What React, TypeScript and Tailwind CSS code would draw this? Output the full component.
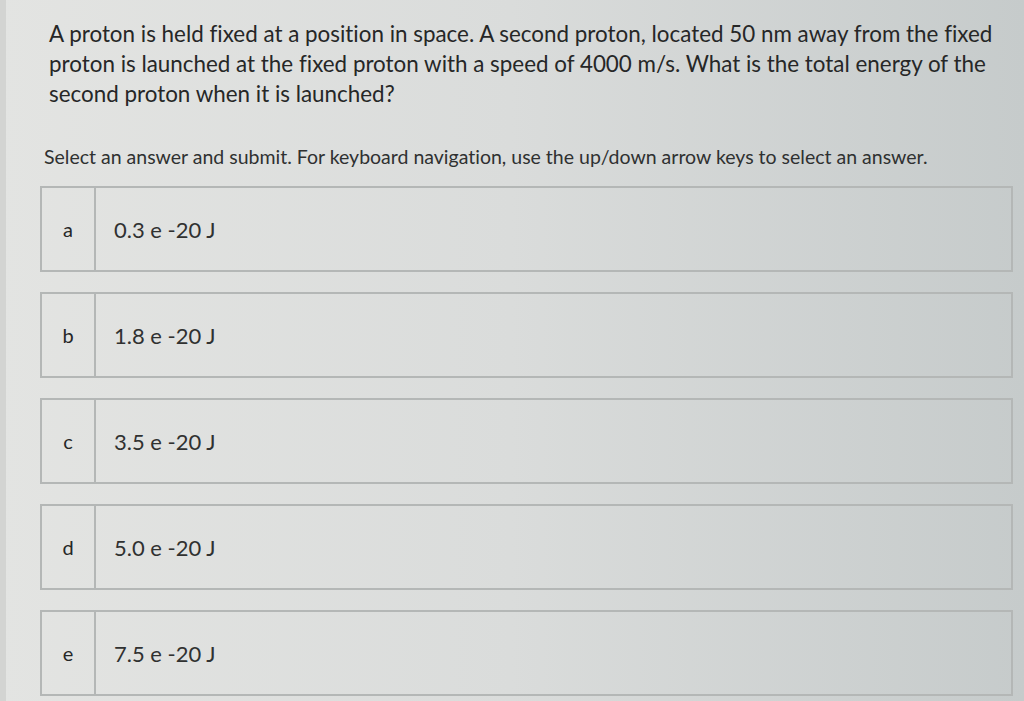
import React from "react";

const answers = [
  { k: "a", v: "0.3 e -20 J" },
  { k: "b", v: "1.8 e -20 J" },
  { k: "c", v: "3.5 e -20 J" },
  { k: "d", v: "5.0 e -20 J" },
  { k: "e", v: "7.5 e -20 J" },
];

export default function App() {
  return (
    <div
      className="w-[1024px] h-[701px] overflow-hidden bg-gradient-to-r from-[#e3e4e2] via-[#dadcdb] to-[#c6cbcb] text-[#262727] [font-variant-ligatures:none]"
      style={{ fontFamily: 'Lato, "Noto Sans", sans-serif' }}
    >
      <div className="flex h-full">
        <div className="w-[6px] shrink-0 bg-[#d3d4d2]" />
        <div className="flex-1 flex flex-col pt-[19px]">
          <p className="ml-[43px] w-[955px] text-[22.4px] leading-[30px]">
            A proton is held fixed at a position in space. A second proton, located 50 nm away from the fixed proton is launched at the fixed proton with a speed of 4000 m/s. What is the total energy of the second proton when it is launched?
          </p>
          <p className="ml-[38px] mt-[36px] text-[19.5px] leading-[24px] text-[#2f3131]">
            Select an answer and submit. For keyboard navigation, use the up/down arrow keys to select an answer.
          </p>
          <div className="ml-[34px] mr-[11px] mt-[17px] flex flex-col gap-[20px]">
            {answers.map((a) => (
              <div
                key={a.k}
                className="flex h-[86px] border-2 border-[#b4b7b6]"
              >
                <div className="w-[54px] shrink-0 flex items-center justify-center border-r-2 border-[#b4b7b6] text-[20px]">
                  {a.k}
                </div>
                <div className="flex items-center pl-[18px] text-[22px] text-[#303131]">
                  {a.v}
                </div>
              </div>
            ))}
          </div>
        </div>
      </div>
    </div>
  );
}
